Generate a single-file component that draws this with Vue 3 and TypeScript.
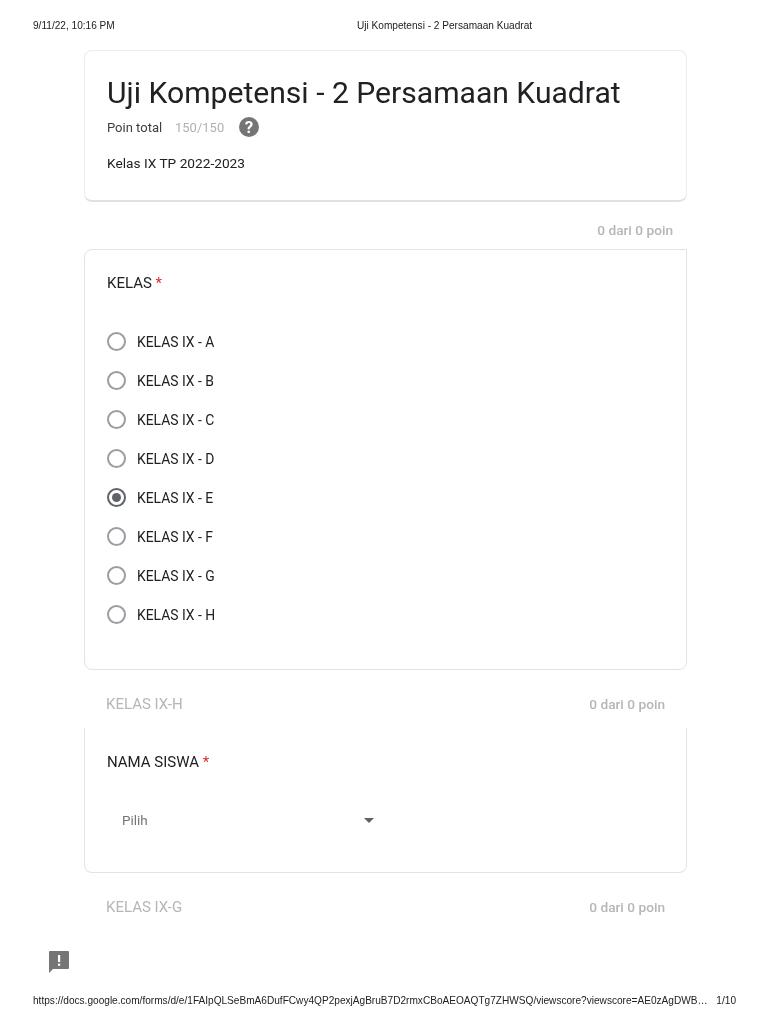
<script setup lang="ts">
const options: { label: string; checked: boolean }[] = [
  { label: 'KELAS IX - A', checked: false },
  { label: 'KELAS IX - B', checked: false },
  { label: 'KELAS IX - C', checked: false },
  { label: 'KELAS IX - D', checked: false },
  { label: 'KELAS IX - E', checked: true },
  { label: 'KELAS IX - F', checked: false },
  { label: 'KELAS IX - G', checked: false },
  { label: 'KELAS IX - H', checked: false },
]
</script>

<template>
  <div class="page">
    <header class="print-head">
      <span class="date">9/11/22, 10:16 PM</span>
      <span class="doc-title">Uji Kompetensi - 2 Persamaan Kuadrat</span>
    </header>

    <main class="sheet">
      <section class="card title-card">
        <h1>Uji Kompetensi - 2 Persamaan Kuadrat</h1>
        <div class="total">
          <span class="total-label">Poin total</span>
          <span class="total-value">150/150</span>
          <span class="help">?</span>
        </div>
        <p class="desc">Kelas IX TP 2022-2023</p>
      </section>

      <div class="meta first-meta">
        <span></span>
        <span class="points">0 dari 0 poin</span>
      </div>

      <section class="card class-card">
        <div class="question">KELAS <span class="req">*</span></div>
        <div class="radios">
          <div v-for="o in options" :key="o.label" class="radio-row">
            <span class="radio" :class="{ checked: o.checked }"></span>
            <span class="radio-label">{{ o.label }}</span>
          </div>
        </div>
      </section>

      <div class="meta">
        <span class="answer">KELAS IX-H</span>
        <span class="points">0 dari 0 poin</span>
      </div>

      <section class="card name-card">
        <div class="question">NAMA SISWA <span class="req">*</span></div>
        <div class="select">
          <span class="select-text">Pilih</span>
          <span class="caret"></span>
        </div>
      </section>

      <div class="meta">
        <span class="answer">KELAS IX-G</span>
        <span class="points">0 dari 0 poin</span>
      </div>
    </main>

    <div class="feedback">
      <svg width="22" height="23" viewBox="0 0 22 23">
        <path d="M2 1h18a1 1 0 0 1 1 1v16a1 1 0 0 1-1 1H5l-4 4V2a1 1 0 0 1 1-1z" fill="#757575" />
        <rect x="10" y="5" width="2.2" height="7" fill="#fff" />
        <rect x="10" y="13.6" width="2.2" height="2.2" fill="#fff" />
      </svg>
    </div>

    <footer class="print-foot">
      <span class="url">https://docs.google.com/forms/d/e/1FAIpQLSeBmA6DufFCwy4QP2pexjAgBruB7D2rmxCBoAEOAQTg7ZHWSQ/viewscore?viewscore=AE0zAgDWB…</span>
      <span class="page-no">1/10</span>
    </footer>
  </div>
</template>

<style>
html,
body {
  margin: 0;
  background: #fff;
}
</style>

<style scoped>
.page {
  position: relative;
  width: 768px;
  height: 1024px;
  display: flex;
  flex-direction: column;
  overflow: hidden;
  background: #fff;
  font-family: Roboto, "Liberation Sans", sans-serif;
  color: #202124;
  filter: blur(0.35px);
}

.print-head {
  position: relative;
  height: 50px;
  padding: 19px 33px 0;
  box-sizing: border-box;
  font-family: "Liberation Sans", sans-serif;
  font-size: 10.1px;
  line-height: 13px;
  color: #222;
}

.doc-title {
  position: absolute;
  left: 357px;
  top: 19px;
}

.sheet {
  width: 603px;
  margin-left: 84px;
  display: flex;
  flex-direction: column;
}

.card {
  box-sizing: border-box;
  background: #fff;
  border: 1px solid #e2e3e5;
  border-radius: 8px;
  padding-left: 22px;
}

.title-card {
  height: 152px;
  padding-top: 22px;
  border-color: #ececee;
  border-bottom: 2px solid #e0e1e3;
}

h1 {
  margin: 0;
  font-size: 30.1px;
  line-height: 40px;
  font-weight: 400;
  color: #202124;
}

.total {
  display: flex;
  align-items: center;
  height: 24px;
  margin-top: 2px;
  font-size: 13px;
}

.total-label {
  width: 68px;
  color: #3c4043;
}

.total-value {
  width: 64px;
  color: #b0b2b5;
}

.help {
  width: 20px;
  height: 20px;
  border-radius: 50%;
  background: #757575;
  color: #fff;
  font-weight: 700;
  font-size: 17px;
  line-height: 20px;
  text-align: center;
}

.desc {
  margin: 15px 0 0;
  font-size: 13.7px;
  line-height: 18px;
  color: #202124;
}

.meta {
  box-sizing: border-box;
  height: 58px;
  display: flex;
  justify-content: space-between;
  align-items: flex-start;
  padding: 25px 22px 0 22px;
  line-height: 18px;
}

.first-meta {
  height: 47px;
  padding-top: 19px;
  padding-right: 14px;
}

.points {
  font-weight: 500;
  font-size: 13.7px;
  color: #b4b6b8;
}

.answer {
  color: #b4b6b8;
  font-size: 15px;
}

.class-card {
  height: 421px;
  padding-top: 23px;
  border-top-right-radius: 0;
}

.question {
  font-size: 15px;
  line-height: 20px;
  color: #202124;
}

.req {
  color: #d93025;
}

.radios {
  display: flex;
  flex-direction: column;
  margin-top: 29px;
}

.radio-row {
  height: 39px;
  display: flex;
  align-items: center;
  gap: 11px;
}

.radio {
  box-sizing: border-box;
  width: 19px;
  height: 19px;
  border: 2px solid #9a9da1;
  border-radius: 50%;
  display: flex;
  align-items: center;
  justify-content: center;
}

.radio.checked {
  border-color: #5f6368;
}

.radio.checked::after {
  content: "";
  width: 9px;
  height: 9px;
  border-radius: 50%;
  background: #5f6368;
}

.radio-label {
  font-size: 13.9px;
  color: #202124;
}

.name-card {
  height: 145px;
  border-top: none;
  border-top-left-radius: 0;
  border-top-right-radius: 0;
  padding-top: 24px;
}

.select {
  display: flex;
  align-items: center;
  margin-top: 38px;
  padding-left: 15px;
  height: 20px;
}

.select-text {
  width: 242px;
  font-size: 13.5px;
  color: #757575;
}

.caret {
  width: 0;
  height: 0;
  border-left: 5px solid transparent;
  border-right: 5px solid transparent;
  border-top: 5px solid #5f6368;
}

.feedback {
  position: absolute;
  left: 48px;
  top: 950px;
  line-height: 0;
}

.print-foot {
  position: absolute;
  left: 33px;
  top: 994px;
  width: 703px;
  display: flex;
  justify-content: space-between;
  font-family: "Liberation Sans", sans-serif;
  font-size: 10.1px;
  line-height: 13px;
  color: #222;
  white-space: nowrap;
}
</style>
